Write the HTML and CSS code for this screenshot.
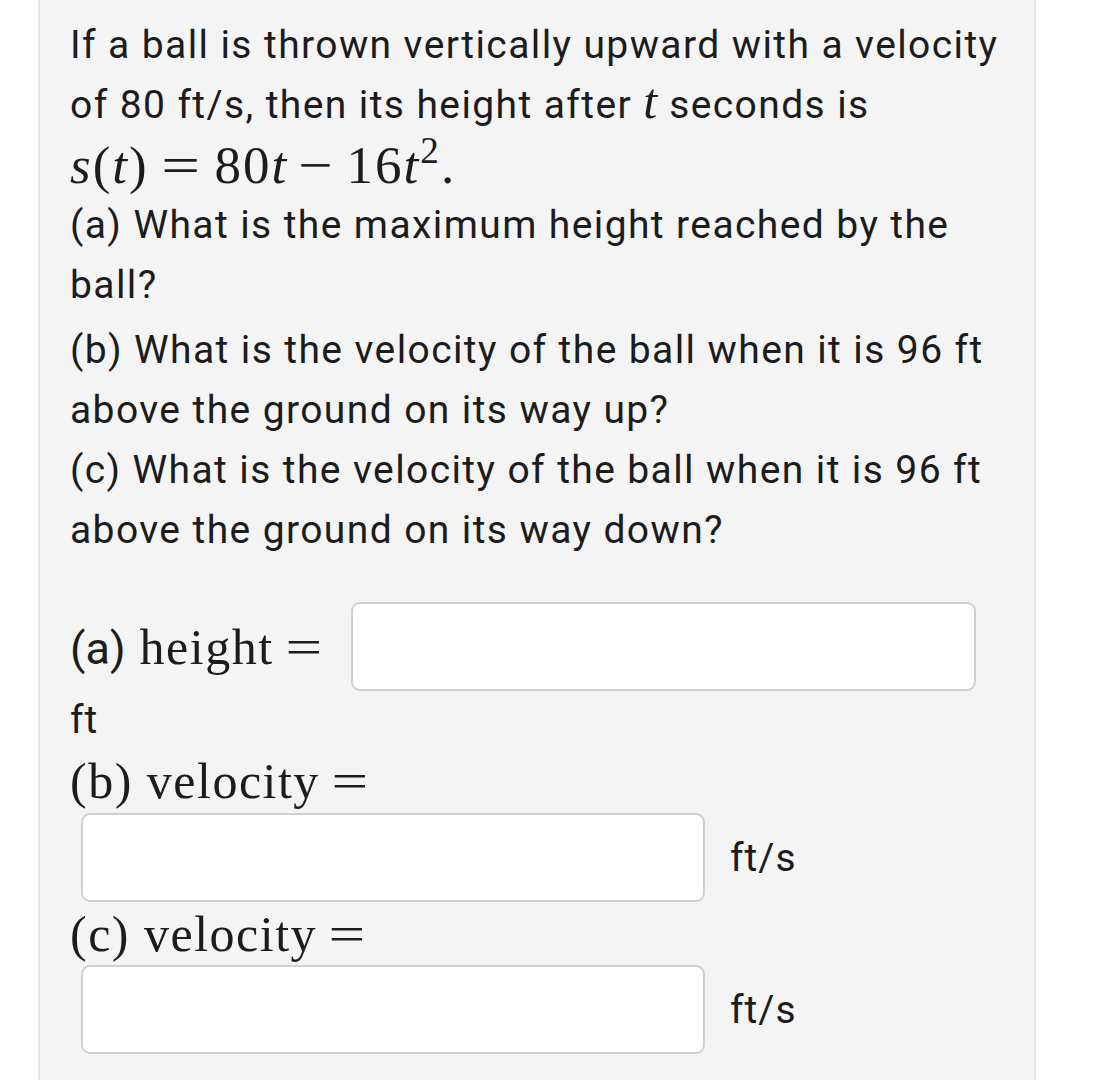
FILE: index.html
```html
<!DOCTYPE html>
<html>
<head>
<meta charset="utf-8">
<link rel="stylesheet" href="styles.css">
</head>
<body>
<div class="panel">
  <div class="question">
    <p class="para">If a ball is thrown vertically upward with a velocity of 80 ft/s, then its height after <span class="mi">t</span> seconds is <span class="math formula"><span class="mi">s</span>(<span class="mi">t</span>)<span class="rel">=</span>80<span class="mi">t</span><span class="bin">−</span>16<span class="mi">t</span><sup class="sup">2</sup>.</span><br>(a) What is the maximum height reached by the ball?</p>
    <p class="para para-2">(b) What is the velocity of the ball when it is 96 ft above the ground on its way up?<br>(c) What is the velocity of the ball when it is 96 ft above the ground on its way down?</p>
  </div>
  <div class="answers">
    <div class="row row-a">
      <span class="math label"><span class="sans">(a)</span> height<span class="rel">=</span></span>
      <div class="input input-a"></div>
    </div>
    <div class="unit-line">ft</div>
    <div class="label-line"><span class="math label">(b) velocity<span class="rel">=</span></span></div>
    <div class="row">
      <div class="input input-b"></div>
      <span class="unit">ft/s</span>
    </div>
    <div class="label-line label-c"><span class="math label">(c) velocity<span class="rel">=</span></span></div>
    <div class="row">
      <div class="input input-b"></div>
      <span class="unit">ft/s</span>
    </div>
  </div>
</div>
</body>
</html>
```

FILE: styles.css
```css
html, body {
  margin: 0;
  padding: 0;
  background: #ffffff;
}
body {
  font-family: Roboto, "Noto Sans", sans-serif;
  color: #1c1c1c;
}
.panel {
  margin-left: 38px;
  width: 998px;
  min-height: 1080px;
  box-sizing: border-box;
  background: #f4f4f4;
  border-left: 2px solid #e6e6e6;
  border-right: 2px solid #e6e6e6;
  padding: 15px 0 0 30px;
}
.para {
  margin: 0;
  font-size: 39px;
  letter-spacing: 1.4px;
  line-height: 60px;
  width: 940px;
}
.para-2 {
  margin-top: 5px;
}
.math {
  font-family: "Liberation Serif", "DejaVu Serif", serif;
  font-size: 50px;
  letter-spacing: 1px;
  white-space: nowrap;
}
.para .math,
.para .mi {
  line-height: 0;
}
.formula {
  font-size: 53px;
  letter-spacing: 2px;
  vertical-align: -5px;
}
.mi {
  font-family: "Liberation Serif", "DejaVu Serif", serif;
  font-style: italic;
  font-size: 50px;
  letter-spacing: 1px;
}
.math .mi {
  font-size: 1em;
  letter-spacing: inherit;
}
.rel {
  display: inline-block;
  margin: 0 0.32em;
  transform: scaleX(1.3);
}
.bin {
  display: inline-block;
  margin: 0 0.25em;
  transform: scaleX(1.15);
}
.sup {
  font-size: 0.7em;
  line-height: 0;
  vertical-align: 0.55em;
}
.answers {
  padding-top: 42px;
}
.row {
  display: flex;
  align-items: center;
}
.row-a {
  height: 89px;
}
.label {
  line-height: 1;
  letter-spacing: 1.5px;
}
.sans {
  font-family: Roboto, "Noto Sans", sans-serif;
  font-size: 45px;
  letter-spacing: 0;
}
.input {
  box-sizing: border-box;
  background: #ffffff;
  border: 2px solid #d0d0d0;
  border-radius: 9px;
  height: 89px;
  width: 625px;
}
.input-a {
  margin-left: 16px;
}
.input-b {
  margin-left: 11px;
  width: 624px;
}
.unit-line {
  font-size: 39px;
  letter-spacing: 1px;
  height: 58px;
  line-height: 58px;
}
.label-line {
  height: 64px;
  display: flex;
  align-items: center;
}
.label-c {
  height: 63px;
}
.unit {
  font-size: 39px;
  letter-spacing: 1px;
  margin-left: 25px;
}
```
